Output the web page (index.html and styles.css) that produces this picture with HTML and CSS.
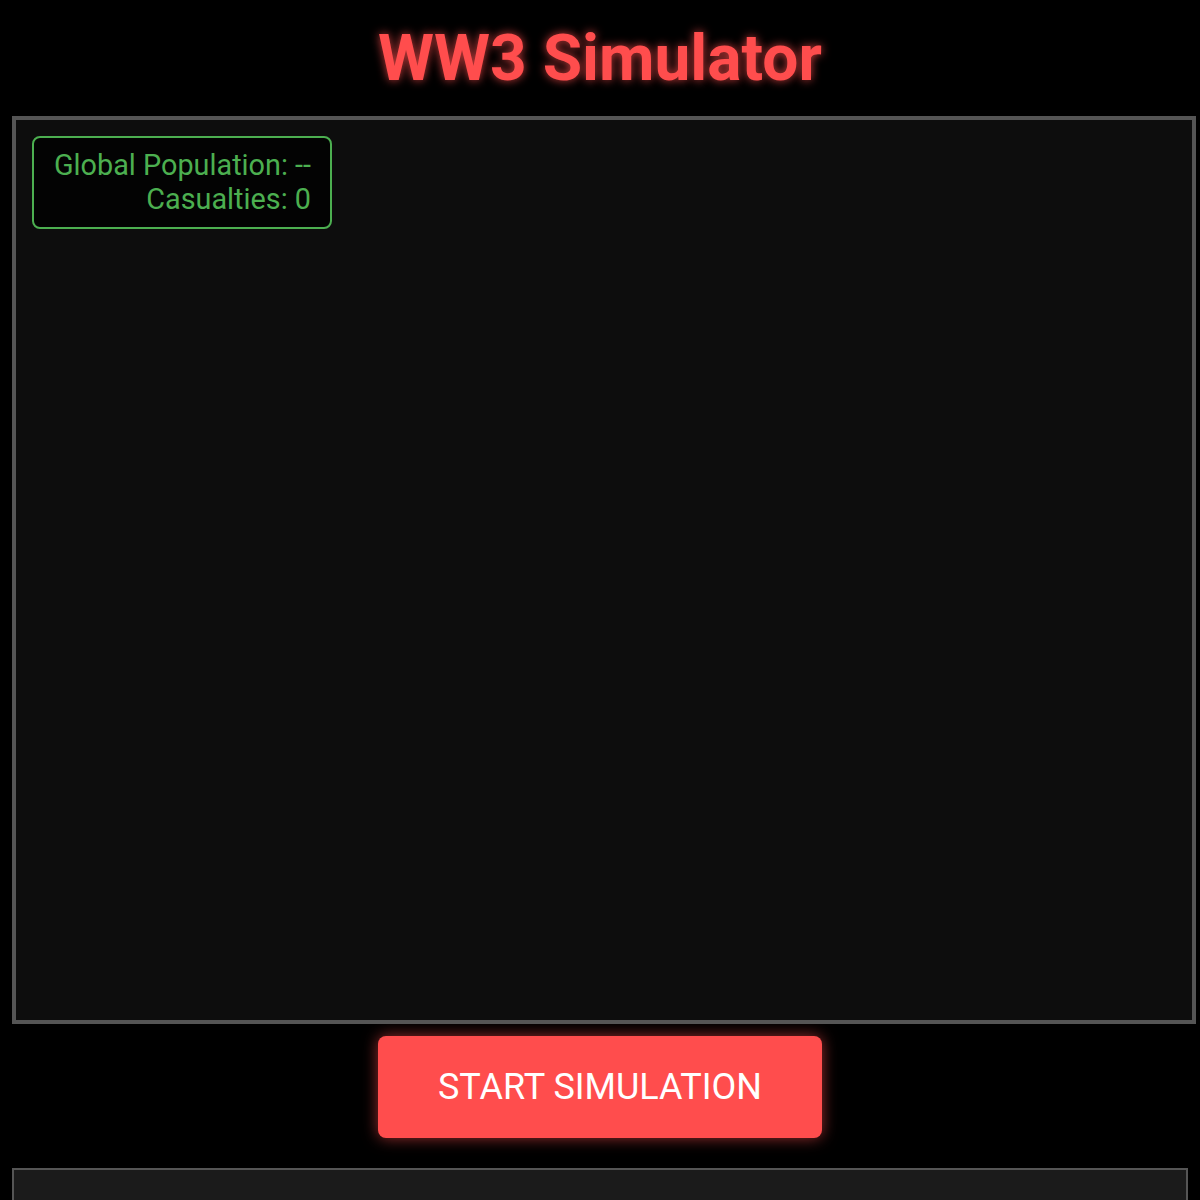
FILE: index.html
```html
<!DOCTYPE html>
<html lang="en">
<head>
    <meta charset="UTF-8">
    <meta name="viewport" content="width=device-width, initial-scale=1.0">
    <title>WW3 Simulator</title>
    <link rel="stylesheet" href="styles.css">
</head>
<body>
    <div class="container">
        <h1 class="title">WW3 Simulator</h1>
        <div class="map" id="map">
            <div class="stats">
                <div>Global Population: <span id="population">--</span></div>
                <div>Casualties: <span id="casualties">0</span></div>
            </div>
        </div>
        <div class="controls">
            <button class="start-button" id="start">START SIMULATION</button>
        </div>
        <div class="log" id="log"></div>
    </div>
</body>
</html>
```

FILE: styles.css
```css
body {
    margin: 0;
    padding: 0;
    background: #000;
    color: white;
    font-family: Roboto, 'Liberation Sans', sans-serif;
}

.container {
    padding: 12px;
}

.title {
    margin: 15px 0 25px;
    text-align: center;
    font-size: 64px;
    line-height: 64px;
    font-weight: bold;
    color: #ff4d4d;
    text-shadow: 0 0 10px rgba(255, 77, 77, 0.8);
}

.map {
    position: relative;
    width: 100%;
    height: 900px;
    border: 4px solid #555;
    background: #0d0d0d;
}

.stats {
    position: absolute;
    top: 16px;
    left: 16px;
    padding: 10px 19px 11px 20px;
    border: 2px solid #4caf50;
    border-radius: 8px;
    background: rgba(0, 0, 0, 0.7);
    color: #4caf50;
    font-size: 28.8px;
    line-height: 34px;
    text-align: right;
}

.controls {
    display: flex;
    justify-content: center;
    margin: 12px 0 30px;
}

.start-button {
    width: 444px;
    height: 102px;
    border: none;
    border-radius: 8px;
    background: #ff4d4d;
    color: white;
    font-family: Roboto, 'Liberation Sans', sans-serif;
    font-size: 36px;
    cursor: pointer;
    box-shadow: 0 0 15px rgba(255, 77, 77, 0.6);
}

.log {
    height: 200px;
    border: 2px solid #555;
    background: #1b1b1b;
}
```
